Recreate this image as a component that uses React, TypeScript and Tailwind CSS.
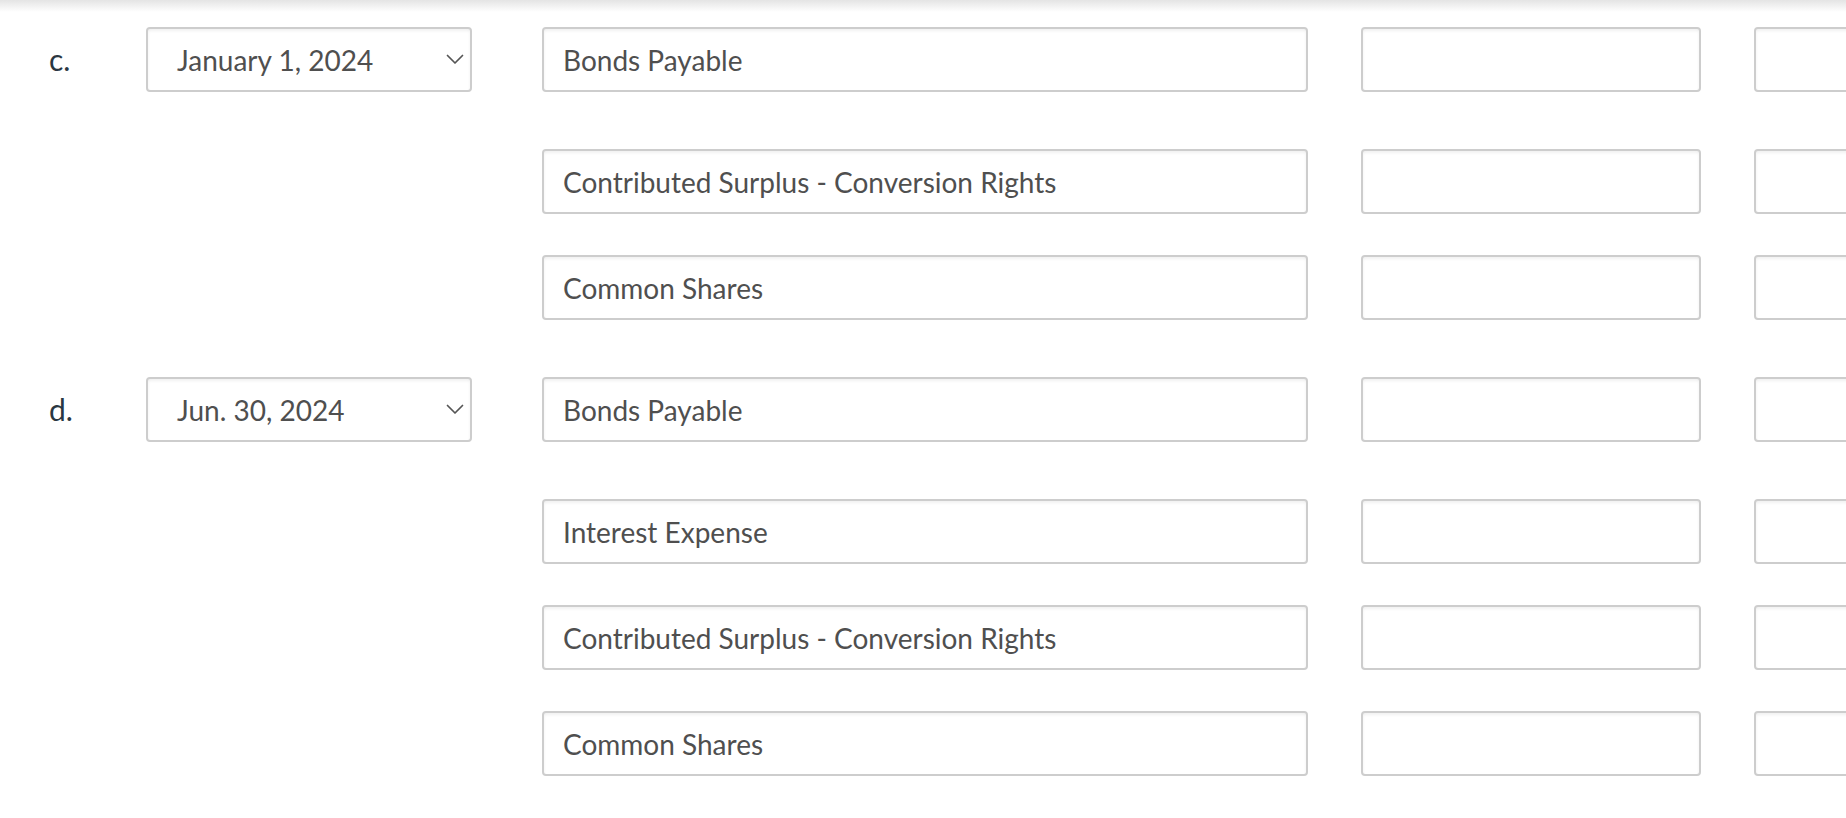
type Line = { account: string }
type Entry = { label: string; date: string; lines: Line[] }

const ENTRIES: Entry[] = [
  {
    label: 'c.',
    date: 'January 1, 2024',
    lines: [
      { account: 'Bonds Payable' },
      { account: 'Contributed Surplus - Conversion Rights' },
      { account: 'Common Shares' },
    ],
  },
  {
    label: 'd.',
    date: 'Jun. 30, 2024',
    lines: [
      { account: 'Bonds Payable' },
      { account: 'Interest Expense' },
      { account: 'Contributed Surplus - Conversion Rights' },
      { account: 'Common Shares' },
    ],
  },
]

const boxClass =
  'h-[65px] shrink-0 rounded-[4px] border-2 border-[#cdcdcd] bg-white shadow-[inset_0_2px_3px_rgba(0,0,0,0.06)] outline-none'

function Chevron() {
  return (
    <svg width="18" height="11" viewBox="0 0 18 11" fill="none" className="shrink-0">
      <polyline points="1.5,1.5 9,9 16.5,1.5" stroke="#555" strokeWidth="1.7" strokeLinecap="round" strokeLinejoin="round" />
    </svg>
  )
}

function DateSelect({ value }: { value: string }) {
  return (
    <div className={`${boxClass} flex w-[326px] items-center justify-between pl-[29px] pr-[6px] text-[28px] text-[#4f4f4f]`}>
      <span>{value}</span>
      <Chevron />
    </div>
  )
}

function EntryRow({ label, date, account, first }: { label?: string; date?: string; account: string; first: boolean }) {
  return (
    <div className={`flex items-center ${first ? 'pb-[57px]' : 'pb-[41px]'}`}>
      <div className="w-[146px] shrink-0 pl-[49px] text-[30px] text-[#2a3742]">{label}</div>
      {date ? <DateSelect value={date} /> : <div className="w-[326px] shrink-0" />}
      <input
        readOnly
        value={account}
        className={`${boxClass} ml-[70px] w-[766px] pl-[19px] text-[28px] text-[#4f4f4f]`}
      />
      <input readOnly value="" className={`${boxClass} ml-[53px] w-[340px]`} />
      <input readOnly value="" className={`${boxClass} ml-[53px] w-[340px]`} />
    </div>
  )
}

export default function App() {
  return (
    <div
      className="h-screen w-full overflow-hidden bg-white"
      style={{ fontFamily: 'Lato, "Open Sans", sans-serif' }}
    >
      <div className="h-[12px] bg-gradient-to-b from-[#e4e4e4] to-white" />
      <div className="pt-[15px]">
        {ENTRIES.map((entry, gi) => (
          <div key={entry.label} className={gi > 0 ? 'pt-[16px]' : ''}>
            {entry.lines.map((line, i) => (
              <EntryRow
                key={i}
                label={i === 0 ? entry.label : undefined}
                date={i === 0 ? entry.date : undefined}
                account={line.account}
                first={i === 0}
              />
            ))}
          </div>
        ))}
      </div>
    </div>
  )
}
